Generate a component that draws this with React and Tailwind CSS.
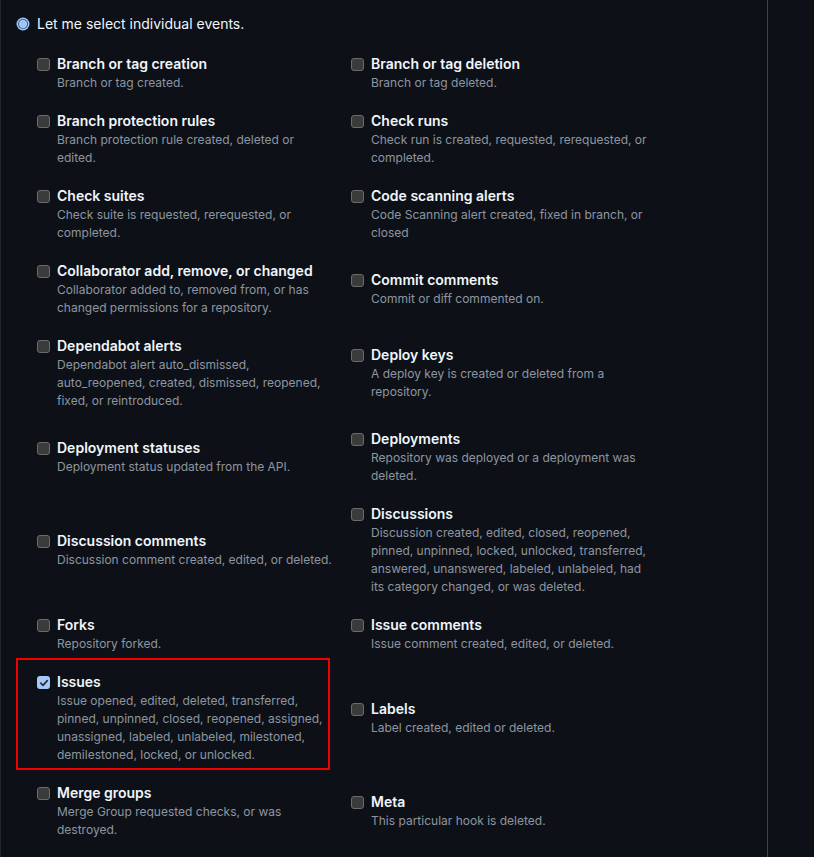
import { Fragment } from "react";

// Event rows, left and right column side by side
const rows = [
  [
    { title: "Branch or tag creation", desc: ["Branch or tag created."] },
    { title: "Branch or tag deletion", desc: ["Branch or tag deleted."] },
  ],
  [
    { title: "Branch protection rules", desc: ["Branch protection rule created, deleted or", "edited."] },
    { title: "Check runs", desc: ["Check run is created, requested, rerequested, or", "completed."] },
  ],
  [
    { title: "Check suites", desc: ["Check suite is requested, rerequested, or", "completed."] },
    { title: "Code scanning alerts", desc: ["Code Scanning alert created, fixed in branch, or", "closed"] },
  ],
  [
    { title: "Collaborator add, remove, or changed", desc: ["Collaborator added to, removed from, or has", "changed permissions for a repository."] },
    { title: "Commit comments", desc: ["Commit or diff commented on."] },
  ],
  [
    { title: "Dependabot alerts", desc: ["Dependabot alert auto_dismissed,", "auto_reopened, created, dismissed, reopened,", "fixed, or reintroduced."] },
    { title: "Deploy keys", desc: ["A deploy key is created or deleted from a", "repository."] },
  ],
  [
    { title: "Deployment statuses", desc: ["Deployment status updated from the API."] },
    { title: "Deployments", desc: ["Repository was deployed or a deployment was", "deleted."] },
  ],
  [
    { title: "Discussion comments", desc: ["Discussion comment created, edited, or deleted."] },
    {
      title: "Discussions",
      desc: [
        "Discussion created, edited, closed, reopened,",
        "pinned, unpinned, locked, unlocked, transferred,",
        "answered, unanswered, labeled, unlabeled, had",
        "its category changed, or was deleted.",
      ],
    },
  ],
  [
    { title: "Forks", desc: ["Repository forked."] },
    { title: "Issue comments", desc: ["Issue comment created, edited, or deleted."] },
  ],
  [
    {
      title: "Issues",
      checked: true,
      highlight: true,
      desc: [
        "Issue opened, edited, deleted, transferred,",
        "pinned, unpinned, closed, reopened, assigned,",
        "unassigned, labeled, unlabeled, milestoned,",
        "demilestoned, locked, or unlocked.",
      ],
    },
    { title: "Labels", desc: ["Label created, edited or deleted."] },
  ],
  [
    { title: "Merge groups", desc: ["Merge Group requested checks, or was", "destroyed."] },
    { title: "Meta", desc: ["This particular hook is deleted."] },
  ],
];

function Checkbox({ checked }) {
  if (checked) {
    return (
      <span className="mt-[4px] flex h-[13px] w-[13px] shrink-0 items-center justify-center rounded-[3px] bg-[#a6c8f8]">
        <svg width="10" height="10" viewBox="0 0 10 10" fill="none">
          <path d="M1.8 5.2 L4 7.4 L8.3 2.6" stroke="#2b3038" strokeWidth="1.7" strokeLinecap="round" strokeLinejoin="round" />
        </svg>
      </span>
    );
  }
  return <span className="mt-[4px] h-[13px] w-[13px] shrink-0 rounded-[3px] border border-[#6b6b6b] bg-[#3b3b3b]" />;
}

function EventItem({ item }) {
  return (
    <div className="relative flex gap-[7px]">
      <Checkbox checked={item.checked} />
      <div>
        <div className="text-[14px] font-semibold leading-[20px] text-[#f0f6fc]">{item.title}</div>
        {item.desc.map((line, i) => (
          <div key={i} className="whitespace-nowrap text-[12px] leading-[18px] text-[#8d96a0]">
            {line}
          </div>
        ))}
      </div>

      {/* red annotation box around the checked event */}
      {item.highlight && (
        <div className="pointer-events-none absolute -left-[21px] -top-[14px] h-[112px] w-[314px] border-2 border-[#f20000]" />
      )}
    </div>
  );
}

export default function App() {
  return (
    <div
      className="min-h-[857px] w-full bg-[#0d1117]"
      style={{ fontFamily: "Inter, 'Noto Sans', sans-serif" }}
    >
      <div className="min-h-[857px] w-[768px] border-l border-r border-l-[#21262d] border-r-[#3d444d] pb-8">
        {/* Radio choice */}
        <div className="flex items-center gap-[7px] pl-[15px] pt-[14px]">
          <svg width="14" height="14" viewBox="0 0 14 14" className="shrink-0">
            <circle cx="7" cy="7" r="6.5" fill="#9fc4f6" />
            <circle cx="7" cy="7" r="5" fill="#2f5285" />
            <circle cx="7" cy="7" r="4.2" fill="#9fc4f6" />
          </svg>
          <span className="text-[14px] leading-[20px] text-[#f0f6fc]">Let me select individual events.</span>
        </div>

        {/* Event checkboxes */}
        <div className="ml-[36px] mt-[20px] grid grid-cols-[314px_314px] items-center gap-y-[19px]">
          {rows.map((pair, i) => (
            <Fragment key={i}>
              <EventItem item={pair[0]} />
              <EventItem item={pair[1]} />
            </Fragment>
          ))}
        </div>
      </div>
    </div>
  );
}
